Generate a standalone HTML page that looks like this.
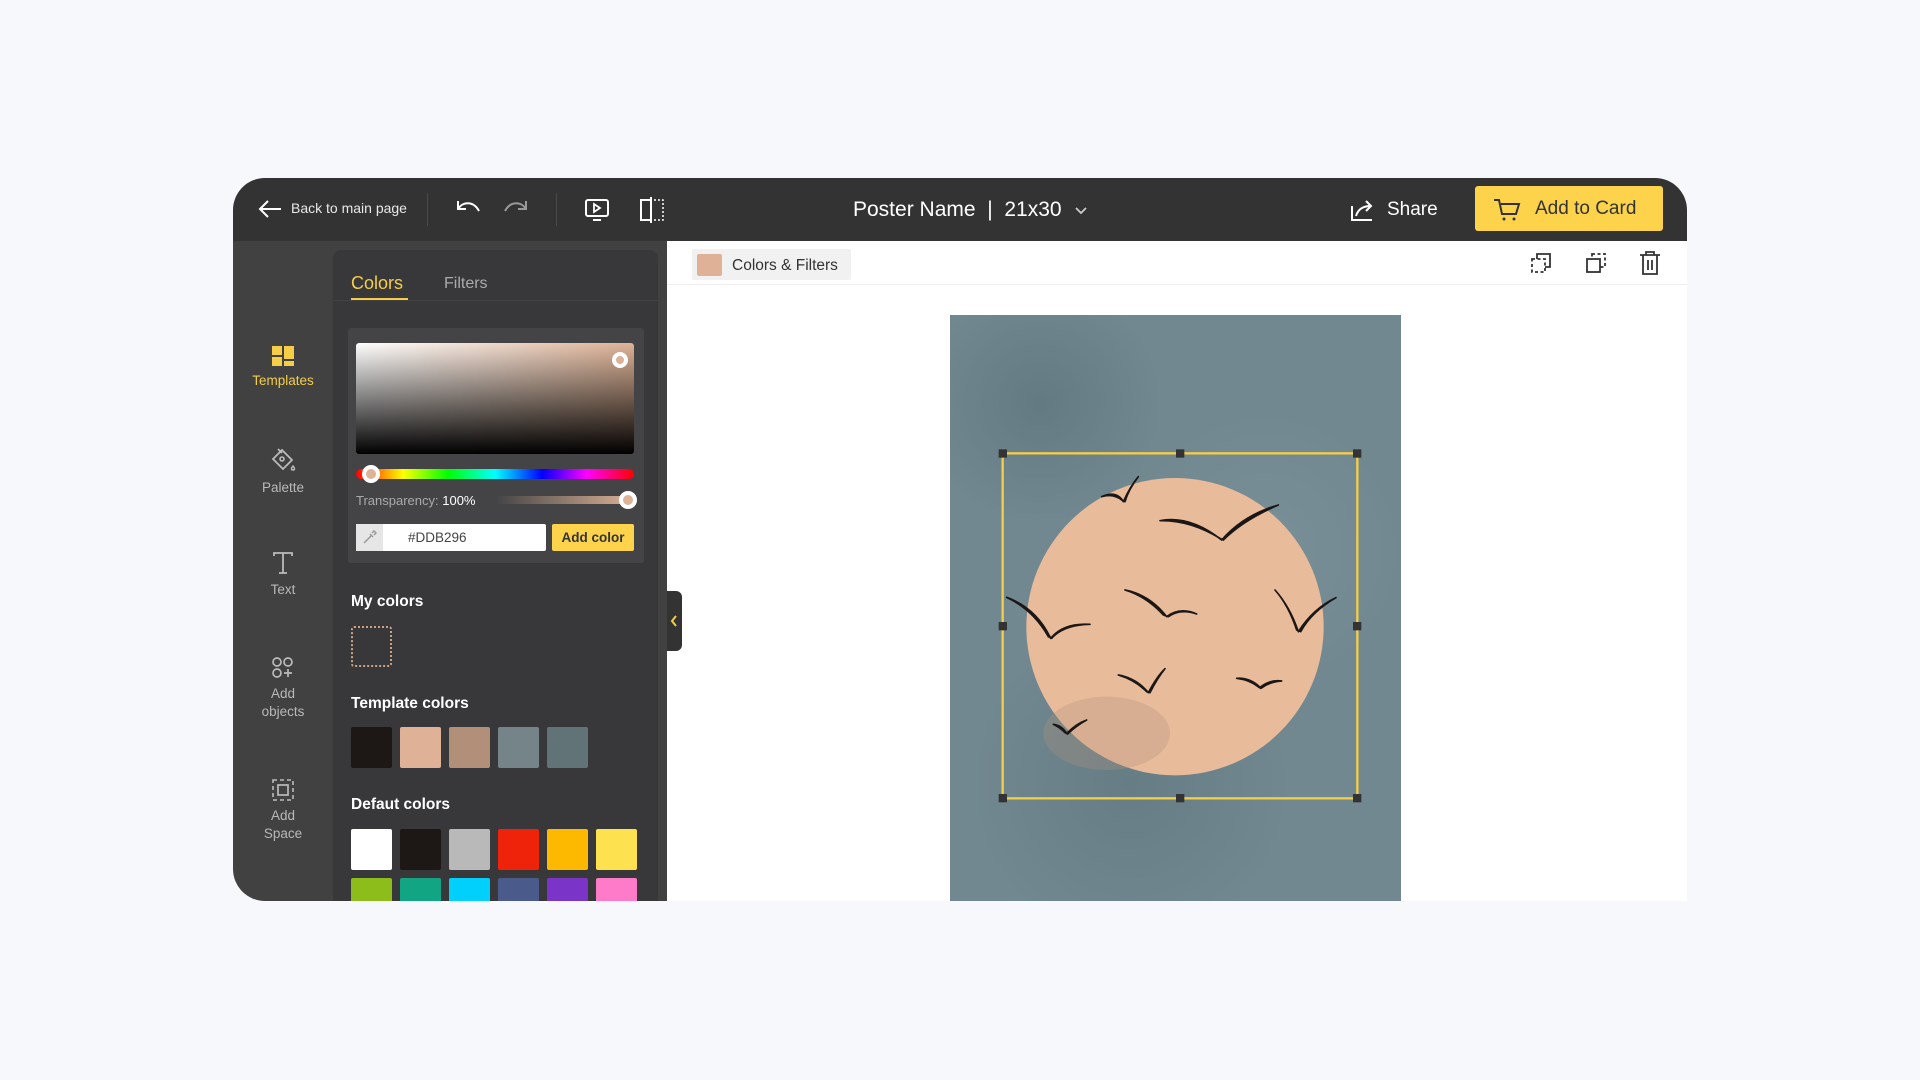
<!DOCTYPE html>
<html><head><meta charset="utf-8"><style>
*{box-sizing:border-box;margin:0;padding:0}
body{width:1920px;height:1080px;background:#f7f8fc;font-family:"Liberation Sans",sans-serif;position:relative;overflow:hidden}
.abs{position:absolute}
.win{left:233px;top:178px;width:1454px;height:723px;border-radius:32px 32px 0 32px;overflow:hidden;background:#fff}
.top{left:0;top:0;width:1454px;height:63px;background:#333333}
.t{color:#fff;white-space:nowrap}
.side{left:0;top:63px;width:434px;height:660px;background:#414141}
.nav{width:100px;text-align:center;color:#b8b8b8;font-size:13.5px;line-height:18px}
.panel{left:100px;top:72px;width:325px;height:651px;background:#38383b;border-radius:8px 8px 0 0}
.lbl{color:#fff;font-weight:bold;font-size:15.5px}
.sw{width:41px;height:41px;border-radius:2px}
</style></head><body>
<div class="abs win">
 <div class="abs top">
  <svg class="abs" style="left:24px;top:19px" width="26" height="24" viewBox="0 0 26 24"><path d="M24 12H3M11 4l-8 8 8 8" stroke="#fff" stroke-width="2" fill="none"/></svg>
  <div class="abs t" style="left:58px;top:22px;font-size:14px;color:#e8e8e8">Back to main page</div>
  <div class="abs" style="left:194px;top:15px;width:1px;height:33px;background:#4a4a4a"></div>
  <svg class="abs" style="left:222px;top:19px" width="28" height="22" viewBox="0 0 28 22"><path d="M3 4v8h8M3 12C7 5 18 3 24 14" stroke="#fff" stroke-width="2" fill="none"/></svg>
  <svg class="abs" style="left:268px;top:19px" width="28" height="22" viewBox="0 0 28 22"><path d="M25 4v8h-8M25 12C21 5 10 3 4 14" stroke="#999" stroke-width="2" fill="none"/></svg>
  <div class="abs" style="left:323px;top:15px;width:1px;height:33px;background:#4a4a4a"></div>
  <svg class="abs" style="left:351px;top:19px" width="26" height="26" viewBox="0 0 26 26"><rect x="2" y="3" width="22" height="16" rx="2" stroke="#fff" stroke-width="2" fill="none"/><path d="M10 7v8l6-4z" stroke="#fff" stroke-width="1.8" fill="none"/><path d="M9 23h8" stroke="#fff" stroke-width="2"/></svg>
  <svg class="abs" style="left:405px;top:18px" width="28" height="28" viewBox="0 0 28 28"><path d="M13 4H3v20h10" stroke="#fff" stroke-width="2" fill="none"/><path d="M13 1v26" stroke="#fff" stroke-width="2"/><path d="M16 4h9v20h-9" stroke="#fff" stroke-width="1.5" stroke-dasharray="2 2" fill="none"/></svg>
  <div class="abs t" style="left:620px;top:20px;font-size:21px">Poster Name&nbsp; | &nbsp;21x30</div>
  <svg class="abs" style="left:841px;top:28px" width="14" height="10" viewBox="0 0 14 10"><path d="M2 2l5 5 5-5" stroke="#ccc" stroke-width="1.8" fill="none"/></svg>
  <svg class="abs" style="left:1116px;top:19px" width="26" height="26" viewBox="0 0 26 26"><path d="M3 9v14h20" stroke="#fff" stroke-width="2" fill="none"/><path d="M7 19c2-7 7-10 15-10M17 4l5 5-5 5" stroke="#fff" stroke-width="2" fill="none"/></svg>
  <div class="abs t" style="left:1154px;top:21px;font-size:19px">Share</div>
  <div class="abs" style="left:1242px;top:8px;width:188px;height:45px;background:#fcd34b;border-radius:3px"></div>
  <svg class="abs" style="left:1260px;top:19px" width="28" height="26" viewBox="0 0 28 26"><path d="M1 3h5l3 14h14l3-10H8" stroke="#333" stroke-width="2" fill="none"/><circle cx="11" cy="22" r="1.5" fill="#333"/><circle cx="21" cy="22" r="1.5" fill="#333"/></svg>
  <div class="abs t" style="left:1302px;top:20px;font-size:19px;color:#333">Add to Card</div>
 </div>
 <div class="abs side">
  <div class="abs nav" style="left:0;top:104px;color:#f5cd47">
   <svg width="24" height="22" viewBox="0 0 24 22"><rect x="1" y="1" width="10" height="9" fill="#f5cd47"/><rect x="13" y="1" width="10" height="13" fill="#f5cd47"/><rect x="1" y="12" width="10" height="9" fill="#f5cd47"/><rect x="13" y="16" width="10" height="5" fill="#f5cd47"/></svg><br>Templates</div>
  <div class="abs nav" style="left:0;top:205px">
   <svg width="28" height="28" viewBox="0 0 28 28"><path d="M4 13l9-9 10 10-9 9z" stroke="#bbb" stroke-width="1.8" fill="none"/><path d="M9 3l4 4" stroke="#bbb" stroke-width="1.8"/><circle cx="13" cy="13" r="2" stroke="#bbb" stroke-width="1.6" fill="none"/><path d="M24 20c-2 2-2 4 0 4s2-2 0-4z" stroke="#bbb" stroke-width="1.5" fill="none"/></svg><br>Palette</div>
  <div class="abs nav" style="left:0;top:309px">
   <svg width="24" height="26" viewBox="0 0 24 26"><path d="M3 6V3h18v3M12 3v20M8 23h8" stroke="#bbb" stroke-width="1.8" fill="none"/></svg><br>Text</div>
  <div class="abs nav" style="left:0;top:415px">
   <svg width="24" height="24" viewBox="0 0 24 24"><circle cx="6" cy="6" r="4" stroke="#bbb" stroke-width="1.7" fill="none"/><circle cx="17" cy="6" r="4" stroke="#bbb" stroke-width="1.7" fill="none"/><circle cx="6" cy="17" r="4" stroke="#bbb" stroke-width="1.7" fill="none"/><path d="M17 13v8M13 17h8" stroke="#bbb" stroke-width="1.7"/></svg><br>Add<br>objects</div>
  <div class="abs nav" style="left:0;top:537px">
   <svg width="24" height="24" viewBox="0 0 24 24"><rect x="2" y="2" width="20" height="20" stroke="#bbb" stroke-width="1.6" stroke-dasharray="4 3" fill="none"/><rect x="7" y="7" width="10" height="10" stroke="#bbb" stroke-width="1.7" fill="none"/></svg><br>Add<br>Space</div>
 </div>
 <div class="abs panel">
  <div class="abs" style="left:18px;top:23px;font-size:18px;color:#f5cd47">Colors</div>
  <div class="abs" style="left:18px;top:48px;width:57px;height:2px;background:#f5cd47"></div>
  <div class="abs" style="left:111px;top:25px;font-size:16px;color:#aaa">Filters</div>
  <div class="abs" style="left:0;top:50px;width:325px;height:1px;background:#444"></div>
  <div class="abs" style="left:15px;top:78px;width:296px;height:235px;background:#444446;border-radius:3px">
   <div class="abs" style="left:8px;top:15px;width:278px;height:111px;border-radius:3px;background:linear-gradient(to bottom,rgba(0,0,0,0),#000),linear-gradient(to right,#fff,#ddb296)"></div>
   <div class="abs" style="left:264px;top:24px;width:16px;height:16px;border-radius:50%;border:4px solid #fff;background:#ddb296"></div>
   <div class="abs" style="left:8px;top:141px;width:278px;height:10px;border-radius:5px;background:linear-gradient(to right,#f00,#ff0 17%,#0f0 33%,#0ff 50%,#00f 67%,#f0f 83%,#f00)"></div>
   <div class="abs" style="left:14px;top:137px;width:18px;height:18px;border-radius:50%;border:4px solid #fff;background:#ddb296"></div>
   <div class="abs" style="left:8px;top:165px;font-size:13px;color:#aaa;white-space:nowrap">Transparency: <span style="color:#fff">100%</span></div>
   <div class="abs" style="left:148px;top:168px;width:138px;height:8px;background:linear-gradient(to right,rgba(221,178,150,0),#ddb296)"></div>
   <div class="abs" style="left:271px;top:163px;width:18px;height:18px;border-radius:50%;border:4px solid #fff;background:#ddb296"></div>
   <div class="abs" style="left:8px;top:196px;width:190px;height:27px;background:#fff;border-radius:2px"></div>
   <div class="abs" style="left:8px;top:196px;width:27px;height:27px;background:#e6e6e6"></div>
   <svg class="abs" style="left:14px;top:202px" width="15" height="15" viewBox="0 0 15 15"><path d="M2 13l7-7M8 4l3 3M10 3l2-2 2 2-2 2" stroke="#999" stroke-width="1.5" fill="none"/></svg>
   <div class="abs" style="left:60px;top:202px;font-size:13.5px;color:#444">#DDB296</div>
   <div class="abs" style="left:204px;top:196px;width:82px;height:27px;background:#fcd34b;border-radius:2px;font-size:13.5px;font-weight:bold;color:#333;text-align:center;line-height:27px">Add color</div>
  </div>
  <div class="abs lbl" style="left:18px;top:343px">My colors</div>
  <div class="abs" style="left:18px;top:376px;width:41px;height:41px;border:2px dotted #c9a283;border-radius:3px"></div>
  <div class="abs lbl" style="left:18px;top:445px">Template colors</div>
  <div class="abs sw" style="left:18px;top:477px;background:#1d1815"></div>
  <div class="abs sw" style="left:67px;top:477px;background:#dfb297"></div>
  <div class="abs sw" style="left:116px;top:477px;background:#b28f79"></div>
  <div class="abs sw" style="left:165px;top:477px;background:#748489"></div>
  <div class="abs sw" style="left:214px;top:477px;background:#617377"></div>
  <div class="abs lbl" style="left:18px;top:546px">Defaut colors</div>
  <div class="abs sw" style="left:18px;top:579px;background:#fff"></div>
  <div class="abs sw" style="left:67px;top:579px;background:#1d1815"></div>
  <div class="abs sw" style="left:116px;top:579px;background:#b9b9b9"></div>
  <div class="abs sw" style="left:165px;top:579px;background:#ee2309"></div>
  <div class="abs sw" style="left:214px;top:579px;background:#fdb900"></div>
  <div class="abs sw" style="left:263px;top:579px;background:#fee14f"></div>
  <div class="abs sw" style="left:18px;top:628px;background:#8cbd1a"></div>
  <div class="abs sw" style="left:67px;top:628px;background:#11a583"></div>
  <div class="abs sw" style="left:116px;top:628px;background:#00d0fb"></div>
  <div class="abs sw" style="left:165px;top:628px;background:#4a5b8b"></div>
  <div class="abs sw" style="left:214px;top:628px;background:#7b34c8"></div>
  <div class="abs sw" style="left:263px;top:628px;background:#fd7bc8"></div>
 </div>
 <div class="abs" style="left:434px;top:413px;width:15px;height:60px;background:#333;border-radius:0 6px 6px 0"></div>
 <svg class="abs" style="left:436px;top:436px" width="10" height="14" viewBox="0 0 10 14"><path d="M7 2L3 7l4 5" stroke="#f5cd47" stroke-width="2" fill="none"/></svg>
 <div class="abs" style="left:434px;top:106px;width:1020px;height:1px;background:#eee"></div>
 <div class="abs" style="left:459px;top:71px;width:159px;height:31px;background:#f1f1f1;border-radius:2px"></div>
 <div class="abs" style="left:464px;top:76px;width:25px;height:22px;background:#dfb297;border-radius:2px"></div>
 <div class="abs" style="left:499px;top:79px;font-size:15.5px;color:#333">Colors &amp; Filters</div>
 <svg class="abs" style="left:1296px;top:73px" width="24" height="24" viewBox="0 0 24 24"><path d="M8 8V3h13v13h-5" stroke="#333" stroke-width="1.8" fill="none"/><rect x="3" y="8" width="13" height="13" stroke="#333" stroke-width="1.8" stroke-dasharray="3 2.5" fill="none"/></svg>
 <svg class="abs" style="left:1351px;top:73px" width="24" height="24" viewBox="0 0 24 24"><rect x="8" y="3" width="13" height="13" stroke="#333" stroke-width="1.8" stroke-dasharray="3 2.5" fill="none"/><rect x="3" y="8" width="13" height="13" stroke="#333" stroke-width="1.8" fill="#fff"/></svg>
 <svg class="abs" style="left:1406px;top:72px" width="22" height="26" viewBox="0 0 22 26"><path d="M1 5h20M7 5V2h8v3M4 5v19h14V5M9 10v10M13 10v10" stroke="#333" stroke-width="1.8" fill="none"/></svg>
 <div class="abs" style="left:717px;top:137px;width:451px;height:586px;background:radial-gradient(circle at 20% 15%,rgba(60,80,88,.25),transparent 20%),radial-gradient(circle at 70% 40%,rgba(140,160,168,.3),transparent 30%),radial-gradient(circle at 40% 80%,rgba(60,80,88,.2),transparent 30%),#718890"></div>
</div>
<svg class="abs" style="left:950px;top:440px" width="420" height="370" viewBox="0 0 1260 1110">
 <circle cx="675" cy="560" r="446" fill="#e8bb9b"/>
 <ellipse cx="470" cy="880" rx="190" ry="110" fill="#b0917b" opacity=".3"/>
 <g fill="#1b1716" stroke="#1b1716" stroke-width="5" stroke-linejoin="round">
  <path d="M455 170Q500 150 520 185Q540 140 565 110Q535 150 525 185L515 180Q490 160 455 170z"/>
  <path d="M630 242Q720 225 815 300Q880 225 985 195Q880 240 820 300L810 295Q720 240 630 242z"/>
  <path d="M525 450Q600 465 650 530Q690 500 740 522Q690 505 655 530L640 525Q590 470 525 450z"/>
  <path d="M170 472Q260 505 302 595Q340 548 420 553Q340 555 305 595L295 590Q250 510 170 472z"/>
  <path d="M975 450Q1020 500 1045 575Q1090 505 1158 473Q1085 515 1052 575L1040 570Q1015 495 975 450z"/>
  <path d="M505 705Q560 715 595 758Q620 710 645 686Q622 715 600 758L590 755Q555 720 505 705z"/>
  <path d="M860 715Q900 712 930 742Q960 718 995 723Q960 725 933 745L927 742Q900 720 860 715z"/>
  <path d="M310 853Q335 856 350 880Q380 850 410 840Q380 856 353 882L345 878Q330 862 310 853z"/>
 </g>
 <rect x="158" y="40" width="1064" height="1035" fill="none" stroke="#f5cd47" stroke-width="7"/>
 <g fill="#333">
  <rect x="146" y="28" width="25" height="25"/><rect x="678" y="28" width="25" height="25"/><rect x="1209" y="28" width="25" height="25"/>
  <rect x="146" y="546" width="25" height="25"/><rect x="1209" y="546" width="25" height="25"/>
  <rect x="146" y="1062" width="25" height="25"/><rect x="678" y="1062" width="25" height="25"/><rect x="1209" y="1062" width="25" height="25"/>
 </g>
</svg>
</body></html>
